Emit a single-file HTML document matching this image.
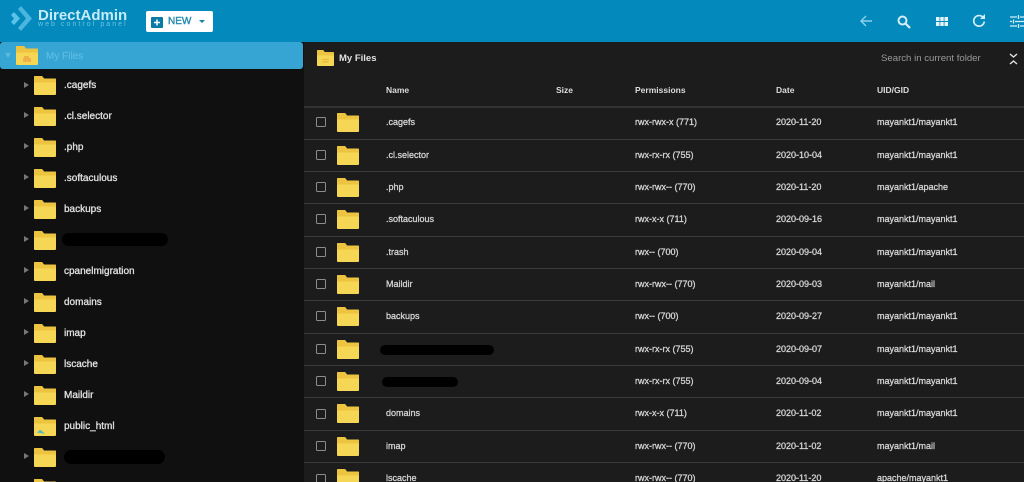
<!DOCTYPE html>
<html><head><meta charset="utf-8"><style>
html,body{margin:0;padding:0;background:#1c1c1c}
#p{position:relative;width:1024px;height:482px;overflow:hidden;background:#1c1c1c;font-family:"Liberation Sans",sans-serif;color:#e0e0e0}
#p div,#p svg{position:absolute}
.t{font-size:9px;line-height:12px;white-space:nowrap;color:#d4d4d4;-webkit-text-stroke:.3px #d4d4d4}
.h{font-size:8.5px;font-weight:bold;line-height:12px;white-space:nowrap;color:#dcdcdc}
.s{font-size:10px;line-height:14px;white-space:nowrap;color:#e2e2e2;-webkit-text-stroke:.3px #e2e2e2}
.l{left:304px;width:720px;height:1px;background:#3a3a3a}
.c{left:316px;width:8px;height:8px;border:1.5px solid #8c8c8c;border-radius:1.5px}
.a{left:24px;width:0;height:0;border-left:5px solid #777;border-top:3.5px solid transparent;border-bottom:3.5px solid transparent}
.b{background:#000;border-radius:7px}
</style></head><body><div id="p">
<svg width="0" height="0"><defs><symbol id="f" viewBox="0 0 22 19"><path d="M0 1Q0 0 1 0H8L10 2.500H21Q22 2.500 22 3.500V18Q22 19 21 19H1Q0 19 0 18Z" fill="#f6d655"/><path d="M0 1Q0 0 1 0H8L10 2.500H21Q22 2.500 22 3.500V6.500H0Z" fill="#ecc440"/></symbol></defs></svg>

<div style="left:0;top:0;width:1024px;height:42px;background:#0389bb"></div>
<svg style="left:10px;top:5px" width="24" height="27" viewBox="0 0 24 27"><path d="M1 10L4 7L10 13.500L4 20L1 17L4 13.500Z" fill="#5cc3e8"/><path d="M8 4L11 1L22 13.500L11 26L8 23L16 13.500Z" fill="#4ab6e0"/></svg>
<div style="left:38px;top:7px;font-size:15px;font-weight:bold;line-height:17px;color:#c5ecf8;white-space:nowrap">DirectAdmin</div>
<div style="left:38px;top:20px;font-size:7px;line-height:9px;letter-spacing:2.050px;color:#6cc4e2;white-space:nowrap">web control panel</div>
<div style="left:146px;top:11px;width:67px;height:21px;background:#fff;border-radius:2px"></div>
<svg style="left:151px;top:17px" width="12" height="11" viewBox="0 0 12 11"><path d="M0 1Q0 0 1 0H11Q12 0 12 1V10Q12 11 11 11H1Q0 11 0 10Z" fill="#0a7ba6"/><path d="M6 2.500V8.500M3 5.500H9" stroke="#fff" stroke-width="1.500"/></svg>
<div style="left:168px;top:15px;font-size:10px;line-height:13px;color:#2a8cb0;-webkit-text-stroke:.4px #2a8cb0">NEW</div>
<div style="left:199px;top:20px;width:0;height:0;border-top:3.500px solid #1a7fa6;border-left:3.500px solid transparent;border-right:3.500px solid transparent"></div>

<svg style="left:858px;top:13px" width="16" height="16" viewBox="0 0 16 16"><path d="M14 8H3M8 3L3 8L8 13" fill="none" stroke="#8fd0ea" stroke-width="1.400"/></svg>
<svg style="left:896px;top:14px" width="16" height="16" viewBox="0 0 16 16"><circle cx="6.500" cy="6.500" r="4" fill="none" stroke="#d5eef8" stroke-width="2"/><path d="M9.500 9.500L14 14" stroke="#d5eef8" stroke-width="2.200"/></svg>
<svg style="left:936px;top:17px" width="12" height="9" viewBox="0 0 12 9"><path d="M0 0H3.500V4H0ZM4.300 0H7.700V4H4.300ZM8.500 0H12V4H8.500ZM0 5H3.500V9H0ZM4.300 5H7.700V9H4.300ZM8.500 5H12V9H8.500Z" fill="#e6f5fb"/></svg>
<svg style="left:972px;top:14px" width="14" height="14" viewBox="0 0 14 14"><path d="M11.500 4A5.300 5.300 0 1 0 12.300 7.500" fill="none" stroke="#d5eef8" stroke-width="1.700"/><path d="M8 5H13V0Z" fill="#d5eef8"/></svg>
<svg style="left:1010px;top:15px" width="14" height="13" viewBox="0 0 14 13"><path d="M0 2H7M10 2H14M0 6.500H2M5 6.500H14M0 11H7M10 11H14M8.500 0V4M3.500 4.500V8.500M8.500 9V13" stroke="#d5eef8" stroke-width="1.300" fill="none"/></svg>

<div style="left:0;top:42px;width:304px;height:440px;background:#101010"></div>
<div style="left:0;top:42px;width:303px;height:27px;background:#36a5d4;border-radius:3px"></div>
<div style="left:5px;top:53px;width:0;height:0;border-top:5px solid #5ab9df;border-left:3.500px solid transparent;border-right:3.500px solid transparent"></div>
<svg style="left:16px;top:46px" width="22" height="19"><use href="#f"/><path d="M8 11H13M7 13H15M7 15H15" stroke="#e8893a" stroke-width="1"/></svg>
<div class="s" style="left:46px;top:50px;color:#5dbbe0;-webkit-text-stroke:.2px #5dbbe0">My Files</div>

<div class="a" style="top:82px"></div><svg style="left:34px;top:76px" width="22" height="19"><use href="#f"/></svg><div class="s" style="left:64px;top:79px">.cagefs</div>
<div class="a" style="top:112px"></div><svg style="left:34px;top:107px" width="22" height="19"><use href="#f"/></svg><div class="s" style="left:64px;top:110px">.cl.selector</div>
<div class="a" style="top:143px"></div><svg style="left:34px;top:138px" width="22" height="19"><use href="#f"/></svg><div class="s" style="left:64px;top:141px">.php</div>
<div class="a" style="top:174px"></div><svg style="left:34px;top:169px" width="22" height="19"><use href="#f"/></svg><div class="s" style="left:64px;top:172px">.softaculous</div>
<div class="a" style="top:205px"></div><svg style="left:34px;top:200px" width="22" height="19"><use href="#f"/></svg><div class="s" style="left:64px;top:203px">backups</div>
<div class="a" style="top:236px"></div><svg style="left:34px;top:231px" width="22" height="19"><use href="#f"/></svg><div class="b" style="left:62px;top:233px;width:106px;height:13px"></div>
<div class="a" style="top:267px"></div><svg style="left:34px;top:262px" width="22" height="19"><use href="#f"/></svg><div class="s" style="left:64px;top:265px">cpanelmigration</div>
<div class="a" style="top:298px"></div><svg style="left:34px;top:293px" width="22" height="19"><use href="#f"/></svg><div class="s" style="left:64px;top:296px">domains</div>
<div class="a" style="top:329px"></div><svg style="left:34px;top:324px" width="22" height="19"><use href="#f"/></svg><div class="s" style="left:64px;top:327px">imap</div>
<div class="a" style="top:360px"></div><svg style="left:34px;top:355px" width="22" height="19"><use href="#f"/></svg><div class="s" style="left:64px;top:358px">lscache</div>
<div class="a" style="top:391px"></div><svg style="left:34px;top:386px" width="22" height="19"><use href="#f"/></svg><div class="s" style="left:64px;top:389px">Maildir</div>
<svg style="left:34px;top:417px" width="22" height="19"><use href="#f"/><path d="M6 13L3 15.500L9 16.500L11 17L8 14Z" fill="#4fb6c9"/></svg><div class="s" style="left:64px;top:420px">public_html</div>
<div class="a" style="top:453px"></div><svg style="left:34px;top:448px" width="22" height="19"><use href="#f"/></svg><div class="b" style="left:64px;top:450px;width:101px;height:14px"></div>
<svg style="left:34px;top:479px" width="22" height="19"><use href="#f"/></svg>

<svg style="left:317px;top:50px" width="17" height="16" viewBox="0 0 22 19" preserveAspectRatio="none"><use href="#f"/><path d="M7 11H15M7 14H15" stroke="#e3a72a" stroke-width="1"/></svg>
<div class="s" style="left:339px;top:52px;font-size:9.500px;font-weight:bold;-webkit-text-stroke:0">My Files</div>
<div style="left:881px;top:52px;font-size:9.600px;line-height:14px;color:#9a9a9a;white-space:nowrap">Search in current folder</div>
<svg style="left:1009px;top:53px" width="9" height="12" viewBox="0 0 9 12"><path d="M1 1L4.500 4L8 1M1 11L4.500 8L8 11" fill="none" stroke="#e5e5e5" stroke-width="1.400"/></svg>

<div class="h" style="left:386px;top:84px">Name</div><div class="h" style="left:556px;top:84px">Size</div><div class="h" style="left:635px;top:84px">Permissions</div><div class="h" style="left:776px;top:84px">Date</div><div class="h" style="left:877px;top:84px">UID/GID</div>

<div class="l" style="top:106px;height:2px;background:#333"></div>
<div class="c" style="top:117px"></div><svg style="left:337px;top:113px" width="22" height="19"><use href="#f"/></svg><div class="t" style="left:386px;top:116px">.cagefs</div><div class="t" style="left:635px;top:116px">rwx-rwx-x (771)</div><div class="t" style="left:776px;top:116px">2020-11-20</div><div class="t" style="left:877px;top:116px">mayankt1/mayankt1</div>
<div class="l" style="top:139px"></div>
<div class="c" style="top:150px"></div><svg style="left:337px;top:146px" width="22" height="19"><use href="#f"/></svg><div class="t" style="left:386px;top:149px">.cl.selector</div><div class="t" style="left:635px;top:149px">rwx-rx-rx (755)</div><div class="t" style="left:776px;top:149px">2020-10-04</div><div class="t" style="left:877px;top:149px">mayankt1/mayankt1</div>
<div class="l" style="top:171px"></div>
<div class="c" style="top:182px"></div><svg style="left:337px;top:178px" width="22" height="19"><use href="#f"/></svg><div class="t" style="left:386px;top:181px">.php</div><div class="t" style="left:635px;top:181px">rwx-rwx-- (770)</div><div class="t" style="left:776px;top:181px">2020-11-20</div><div class="t" style="left:877px;top:181px">mayankt1/apache</div>
<div class="l" style="top:203px"></div>
<div class="c" style="top:214px"></div><svg style="left:337px;top:210px" width="22" height="19"><use href="#f"/></svg><div class="t" style="left:386px;top:213px">.softaculous</div><div class="t" style="left:635px;top:213px">rwx-x-x (711)</div><div class="t" style="left:776px;top:213px">2020-09-16</div><div class="t" style="left:877px;top:213px">mayankt1/mayankt1</div>
<div class="l" style="top:236px"></div>
<div class="c" style="top:247px"></div><svg style="left:337px;top:243px" width="22" height="19"><use href="#f"/></svg><div class="t" style="left:386px;top:246px">.trash</div><div class="t" style="left:635px;top:246px">rwx-- (700)</div><div class="t" style="left:776px;top:246px">2020-09-04</div><div class="t" style="left:877px;top:246px">mayankt1/mayankt1</div>
<div class="l" style="top:268px"></div>
<div class="c" style="top:279px"></div><svg style="left:337px;top:275px" width="22" height="19"><use href="#f"/></svg><div class="t" style="left:386px;top:278px">Maildir</div><div class="t" style="left:635px;top:278px">rwx-rwx-- (770)</div><div class="t" style="left:776px;top:278px">2020-09-03</div><div class="t" style="left:877px;top:278px">mayankt1/mail</div>
<div class="l" style="top:300px"></div>
<div class="c" style="top:311px"></div><svg style="left:337px;top:307px" width="22" height="19"><use href="#f"/></svg><div class="t" style="left:386px;top:310px">backups</div><div class="t" style="left:635px;top:310px">rwx-- (700)</div><div class="t" style="left:776px;top:310px">2020-09-27</div><div class="t" style="left:877px;top:310px">mayankt1/mayankt1</div>
<div class="l" style="top:333px"></div>
<div class="c" style="top:344px"></div><svg style="left:337px;top:340px" width="22" height="19"><use href="#f"/></svg><div class="b" style="left:380px;top:345px;width:114px;height:10px"></div><div class="t" style="left:635px;top:343px">rwx-rx-rx (755)</div><div class="t" style="left:776px;top:343px">2020-09-07</div><div class="t" style="left:877px;top:343px">mayankt1/mayankt1</div>
<div class="l" style="top:365px"></div>
<div class="c" style="top:376px"></div><svg style="left:337px;top:372px" width="22" height="19"><use href="#f"/></svg><div class="b" style="left:382px;top:377px;width:76px;height:10px"></div><div class="t" style="left:635px;top:375px">rwx-rx-rx (755)</div><div class="t" style="left:776px;top:375px">2020-09-04</div><div class="t" style="left:877px;top:375px">mayankt1/mayankt1</div>
<div class="l" style="top:397px"></div>
<div class="c" style="top:409px"></div><svg style="left:337px;top:404px" width="22" height="19"><use href="#f"/></svg><div class="t" style="left:386px;top:407px">domains</div><div class="t" style="left:635px;top:407px">rwx-x-x (711)</div><div class="t" style="left:776px;top:407px">2020-11-02</div><div class="t" style="left:877px;top:407px">mayankt1/mayankt1</div>
<div class="l" style="top:430px"></div>
<div class="c" style="top:441px"></div><svg style="left:337px;top:437px" width="22" height="19"><use href="#f"/></svg><div class="t" style="left:386px;top:440px">imap</div><div class="t" style="left:635px;top:440px">rwx-rwx-- (770)</div><div class="t" style="left:776px;top:440px">2020-11-02</div><div class="t" style="left:877px;top:440px">mayankt1/mail</div>
<div class="l" style="top:462px"></div>
<div class="c" style="top:474px"></div><svg style="left:337px;top:469px" width="22" height="19"><use href="#f"/></svg><div class="t" style="left:386px;top:472px">lscache</div><div class="t" style="left:635px;top:472px">rwx-rwx-- (770)</div><div class="t" style="left:776px;top:472px">2020-11-20</div><div class="t" style="left:877px;top:472px">apache/mayankt1</div>
</div></body></html>
